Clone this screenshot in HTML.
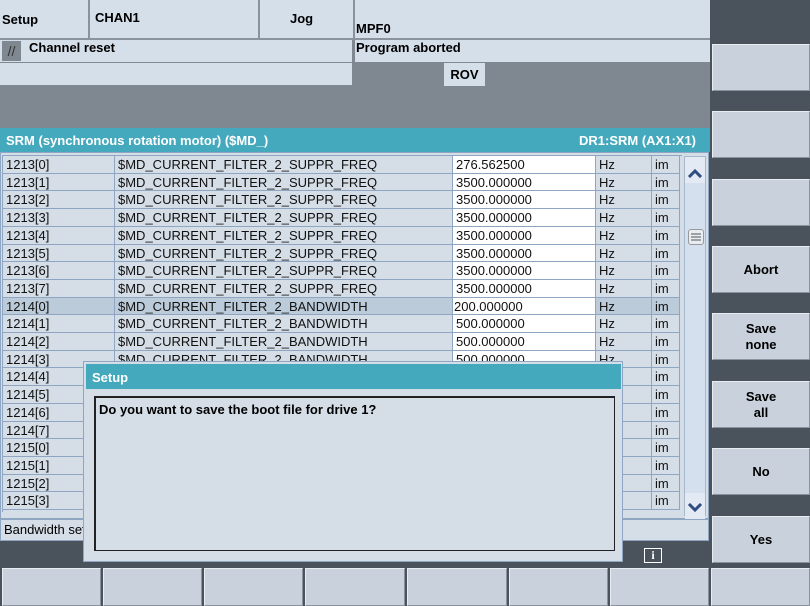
<!DOCTYPE html>
<html><head><meta charset="utf-8"><style>
*{margin:0;padding:0;box-sizing:border-box}
body{width:810px;height:606px;overflow:hidden;background:#4a525c;font-family:"Liberation Sans",sans-serif;position:relative}
.a{position:absolute}
.b{font-weight:bold;font-size:13px;color:#000}
.btn{position:absolute;background:#c9d2dc;border-top:1px solid #e8edf2;border-left:1px solid #e8edf2;border-right:1px solid #8a939d;border-bottom:1px solid #8a939d;font-weight:bold;font-size:13px;text-align:center;display:flex;align-items:center;justify-content:center;line-height:16px}
.row{position:absolute;left:3px;width:678px;font-size:13px;color:#111}
.row div{position:absolute;top:0;height:100%;border-right:1px solid #8ea6c2;border-bottom:1px solid #8ea6c2;padding-left:3px;line-height:17px;white-space:nowrap;overflow:hidden;background:#d5dde6}
.c1{left:0;width:112px}.c2{left:112px;width:338px}.c3{left:450px;width:143px;background:#fff!important}.c4{left:593px;width:56px}.c5{left:649px;width:28px}
.sel div{background:#bccbd9}
</style></head><body>
<div class="a" style="left:0;top:0;width:710px;height:128px;background:#7f8790"></div>
<div class="a" style="left:0;top:0;width:710px;height:38px;background:#d5dfea"></div>
<div class="a" style="left:88px;top:0;width:2px;height:38px;background:#8a939d"></div>
<div class="a" style="left:258px;top:0;width:2px;height:38px;background:#8a939d"></div>
<div class="a" style="left:353px;top:0;width:2px;height:38px;background:#8a939d"></div>
<div class="a b" style="left:2px;top:12px">Setup</div>
<div class="a b" style="left:95px;top:10px">CHAN1</div>
<div class="a b" style="left:290px;top:11px">Jog</div>
<div class="a b" style="left:356px;top:21px">MPF0</div>
<div class="a" style="left:0;top:38px;width:710px;height:2px;background:#8a939d"></div>
<div class="a" style="left:0;top:40px;width:352px;height:22px;background:#d5dfea"></div>
<div class="a" style="left:355px;top:40px;width:355px;height:22px;background:#d5dfea"></div>
<div class="a" style="left:2px;top:41px;width:19px;height:20px;background:#7f8790;color:#333;font-size:14px;text-align:center;line-height:20px">//</div>
<div class="a b" style="left:29px;top:40px">Channel reset</div>
<div class="a b" style="left:356px;top:40px">Program aborted</div>
<div class="a" style="left:0;top:63px;width:352px;height:22px;background:#d5dfea"></div>
<div class="a b" style="left:444px;top:63px;width:41px;height:23px;background:#d5dfea;text-align:center;line-height:23px">ROV</div>
<div class="btn" style="left:712px;top:44px;width:98px;height:47px"></div>
<div class="btn" style="left:712px;top:111px;width:98px;height:47px"></div>
<div class="btn" style="left:712px;top:179px;width:98px;height:47px"></div>
<div class="btn" style="left:712px;top:246px;width:98px;height:47px">Abort</div>
<div class="btn" style="left:712px;top:313px;width:98px;height:47px">Save<br>none</div>
<div class="btn" style="left:712px;top:381px;width:98px;height:47px">Save<br>all</div>
<div class="btn" style="left:712px;top:448px;width:98px;height:47px">No</div>
<div class="btn" style="left:712px;top:516px;width:98px;height:47px">Yes</div>
<div class="btn" style="left:2px;top:568px;width:99px;height:38px"></div>
<div class="btn" style="left:103px;top:568px;width:99px;height:38px"></div>
<div class="btn" style="left:204px;top:568px;width:99px;height:38px"></div>
<div class="btn" style="left:305px;top:568px;width:100px;height:38px"></div>
<div class="btn" style="left:407px;top:568px;width:100px;height:38px"></div>
<div class="btn" style="left:509px;top:568px;width:99px;height:38px"></div>
<div class="btn" style="left:610px;top:568px;width:99px;height:38px"></div>
<div class="btn" style="left:711px;top:568px;width:99px;height:38px"></div>
<div class="a" style="left:0;top:128px;width:710px;height:24px;background:#45a9bd;color:#fff;font-weight:bold;font-size:13px;line-height:26px;padding:0 14px 0 6px">SRM (synchronous rotation motor) ($MD_)<span style="float:right">DR1:SRM (AX1:X1)</span></div>
<div class="a" style="left:0;top:152px;width:709px;height:367px;background:#d5dde6;border:1px solid #8ea6c2"></div>
<div class="a" style="left:2px;top:155px;width:680px;height:357px;border-left:1px solid #8ea6c2;border-top:1px solid #8ea6c2"></div>
<div id="rows"></div>
<div class="a" style="left:684px;top:156px;width:22px;height:360px;background:#d5e0ee;border:1px solid #a8b8cc"></div>
<div class="a" style="left:685px;top:157px;width:20px;height:26px;background:#e3eaf3;text-align:center;padding-top:8px"><svg width="16" height="10" viewBox="0 0 16 10"><path d="M2 9 L8 3 L14 9" stroke="#2e4d80" stroke-width="3" fill="none"/></svg></div>
<div class="a" style="left:688px;top:229px;width:16px;height:16px;background:#e8edf3;border:1px solid #999;border-radius:3px"><svg width="14" height="14" viewBox="0 0 14 14"><path d="M2 4h10M2 7h10M2 10h10" stroke="#555" stroke-width="1"/></svg></div>
<div class="a" style="left:685px;top:493px;width:20px;height:26px;background:#e3eaf3;text-align:center;padding-top:7px"><svg width="16" height="10" viewBox="0 0 16 10"><path d="M2 1 L8 7 L14 1" stroke="#2e4d80" stroke-width="3" fill="none"/></svg></div>
<div class="a" style="left:0;top:519px;width:709px;height:22px;background:#d5dde6;border:1px solid #8ea6c2;font-size:13px;line-height:20px;padding-left:3px">Bandwidth setpoint filter</div>
<div class="a" style="left:644px;top:548px;width:18px;height:15px;border:1px solid #fff;color:#fff;font-size:12px;font-weight:bold;text-align:center;line-height:13px;font-family:'Liberation Serif',serif">i</div>
<div class="a" style="left:83px;top:361px;width:540px;height:201px;background:#d5dde6;border:1px solid #8ea6c2"></div>
<div class="a" style="left:86px;top:364px;width:535px;height:25px;background:#45a9bd;color:#fff;font-weight:bold;font-size:13px;line-height:27px;padding-left:6px">Setup</div>
<div class="a" style="left:94px;top:396px;width:521px;height:155px;border:1px solid #222;border-top-width:2px;border-left-width:2px;background:#d5dde6"></div>
<div class="a b" style="left:99px;top:402px">Do you want to save the boot file for drive 1?</div>
<script>
var d=[["1213[0]","$MD_CURRENT_FILTER_2_SUPPR_FREQ","276.562500"],["1213[1]","$MD_CURRENT_FILTER_2_SUPPR_FREQ","3500.000000"],["1213[2]","$MD_CURRENT_FILTER_2_SUPPR_FREQ","3500.000000"],["1213[3]","$MD_CURRENT_FILTER_2_SUPPR_FREQ","3500.000000"],["1213[4]","$MD_CURRENT_FILTER_2_SUPPR_FREQ","3500.000000"],["1213[5]","$MD_CURRENT_FILTER_2_SUPPR_FREQ","3500.000000"],["1213[6]","$MD_CURRENT_FILTER_2_SUPPR_FREQ","3500.000000"],["1213[7]","$MD_CURRENT_FILTER_2_SUPPR_FREQ","3500.000000"],["1214[0]","$MD_CURRENT_FILTER_2_BANDWIDTH","200.000000"],["1214[1]","$MD_CURRENT_FILTER_2_BANDWIDTH","500.000000"],["1214[2]","$MD_CURRENT_FILTER_2_BANDWIDTH","500.000000"],["1214[3]","$MD_CURRENT_FILTER_2_BANDWIDTH","500.000000"],["1214[4]","",""],["1214[5]","",""],["1214[6]","",""],["1214[7]","",""],["1215[0]","",""],["1215[1]","",""],["1215[2]","",""],["1215[3]","",""]];
var h="";for(var i=0;i<d.length;i++){var t=Math.round(156+i*17.7),n=Math.round(156+(i+1)*17.7);h+='<div class="row'+(i==8?' sel':'')+'" style="top:'+t+'px;height:'+(n-t)+'px"><div class="c1">'+d[i][0]+'</div><div class="c2">'+d[i][1]+'</div><div class="c3"'+(i==8?' style="padding-left:1px"':'')+'>'+d[i][2]+'</div><div class="c4">Hz</div><div class="c5">im</div></div>';}
document.getElementById("rows").outerHTML=h;
</script>
</body></html>
